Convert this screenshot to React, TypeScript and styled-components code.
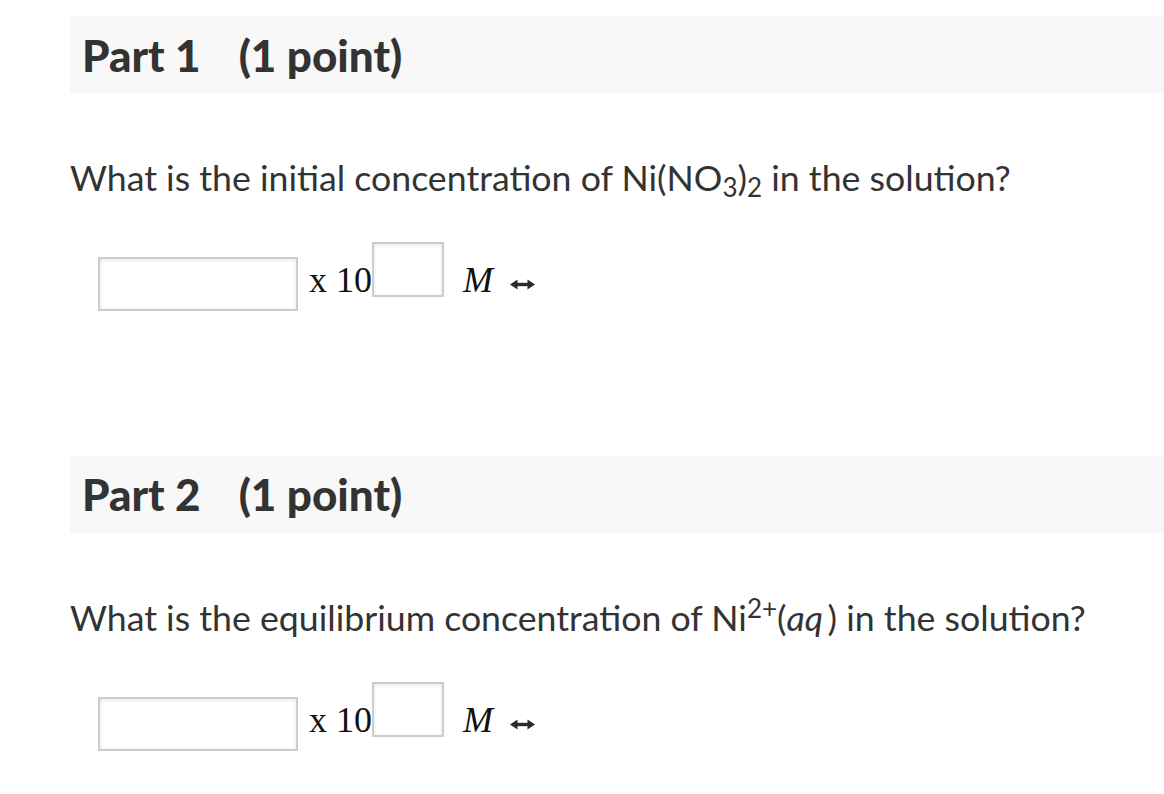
import React from "react";
import styled, { createGlobalStyle } from "styled-components";

const GlobalStyle = createGlobalStyle`
  body {
    margin: 0;
    background: #ffffff;
    font-family: "Lato", "Noto Sans", sans-serif;
    color: #333333;
  }
`;

const Page = styled.div`
  padding: 16px 0 0 70px;
  display: flex;
  flex-direction: column;
  gap: 145px;
`;

const Part = styled.section``;

const PartHeader = styled.h2`
  margin: 0;
  height: 77px;
  display: flex;
  align-items: center;
  padding-left: 12px;
  background: #f8f8f8;
  font-size: 44px;
  font-weight: 900;
  color: #333333;
`;

const Points = styled.span`
  margin-left: 38px;
`;

const Question = styled.p`
  margin: 64px 0 0;
  font-size: 35.7px;
  line-height: 1.2;
  color: #333333;
`;

const Sub = styled.sub`
  font-size: 26px;
  vertical-align: -6px;
  line-height: 0;
`;

const Sup = styled.sup`
  font-size: 26px;
  vertical-align: 13px;
  line-height: 0;
`;

const AnswerRow = styled.div`
  margin-top: 42px;
  padding-left: 28px;
  display: flex;
  align-items: flex-start;
`;

const AnswerInput = styled.input<{ $w: number; $top: number }>`
  box-sizing: border-box;
  width: ${p => p.$w}px;
  height: ${p => (p.$top ? 54 : 55)}px;
  margin-top: ${p => p.$top}px;
  border: 2px solid #cccccc;
  box-shadow: inset 0 1px 4px rgba(0, 0, 0, 0.1);
  background: #ffffff;
  padding: 0 6px;
  font-size: 30px;
  outline: none;
`;

const Times = styled.span<{ $top: number; $left: number }>`
  font-family: "Liberation Serif", "Times New Roman", serif;
  font-size: 36px;
  line-height: 1;
  color: #111111;
  margin-top: ${p => p.$top}px;
  margin-left: ${p => p.$left}px;
`;

const Unit = styled(Times)`
  font-style: italic;
`;

const Arrow = styled.svg`
  margin-left: 17px;
  margin-top: 37px;
`;

const SwapArrow = () => (
  <Arrow width="25" height="11" viewBox="0 0 25 11">
    <rect x="5" y="3.8" width="15" height="3.4" fill="#2b2b2b" />
    <path d="M0 5.5 L7.5 0.5 L7.5 10.5 Z" fill="#2b2b2b" />
    <path d="M25 5.5 L17.5 0.5 L17.5 10.5 Z" fill="#2b2b2b" />
  </Arrow>
);

const Answer = () => (
  <AnswerRow>
    <AnswerInput $w={200} $top={15} />
    <Times $top={20} $left={11}>
      x 10
    </Times>
    <AnswerInput $w={72} $top={0} />
    <Unit $top={20} $left={19}>
      M
    </Unit>
    <SwapArrow />
  </AnswerRow>
);

const App = () => (
  <>
    <GlobalStyle />
    <Page>
      <Part>
        <PartHeader>
          Part 1<Points>(1 point)</Points>
        </PartHeader>
        <Question>
          What is the initial concentration of Ni(NO<Sub>3</Sub>)<Sub>2</Sub> in
          the solution?
        </Question>
        <Answer />
      </Part>
      <Part>
        <PartHeader>
          Part 2<Points>(1 point)</Points>
        </PartHeader>
        <Question>
          What is the equilibrium concentration of Ni<Sup>2+</Sup>(<i>aq</i>
          &thinsp;) in the solution?
        </Question>
        <Answer />
      </Part>
    </Page>
  </>
);

export default App;
